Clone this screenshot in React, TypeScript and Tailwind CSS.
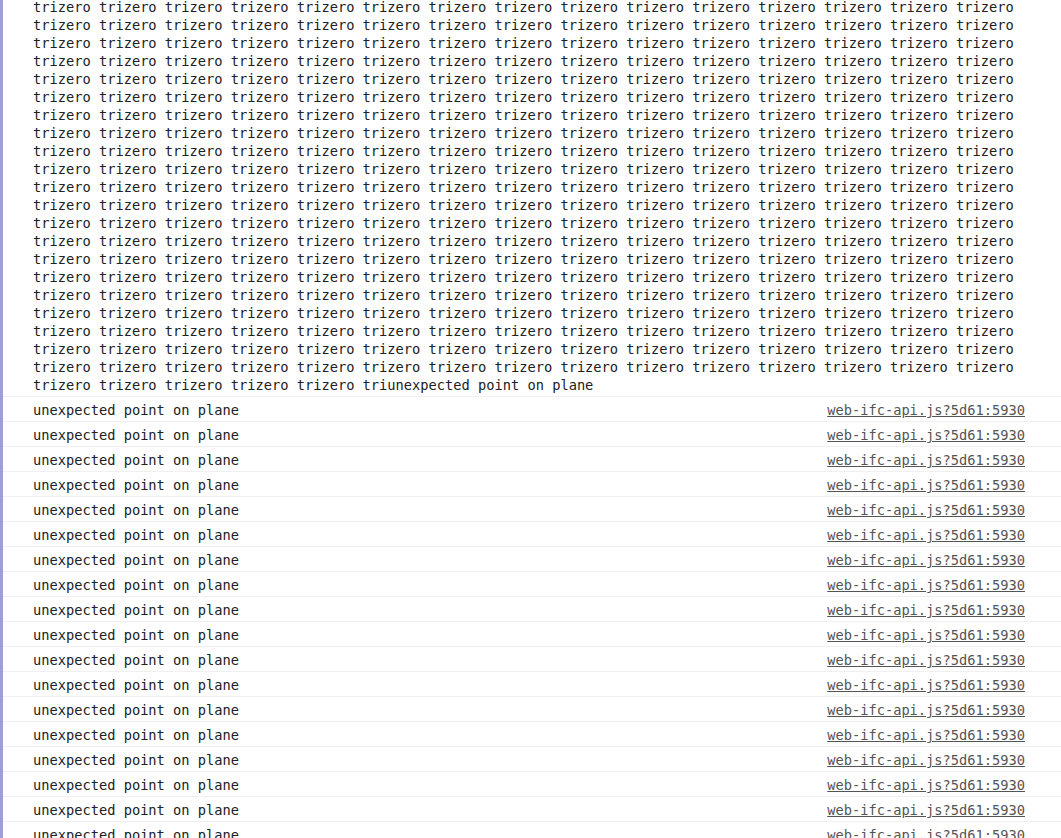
import React from "react";

const full = Array(15).fill("trizero").join(" ");
const lines: string[] = [...Array(21).fill(full), "trizero trizero trizero trizero trizero triunexpected point on plane"];

export default function App() {
  return (
    <div
      className="w-[1061px] h-[838px] overflow-hidden bg-white border-l-[3px] border-[#9d9dd8] text-[#202124]"
      style={{ fontFamily: '"DejaVu Sans Mono", monospace' }}
    >
      <div className="text-[13.7px] leading-[18px]">
        <div className="pl-[30px] -mt-[2px] pb-[2px] border-b border-[#f0f0f0]">
          {lines.map((l, i) => (
            <div key={i} className="whitespace-pre h-[18px]">
              {l}
            </div>
          ))}
        </div>
        {Array.from({ length: 18 }).map((_, i) => (
          <div
            key={i}
            className="flex justify-between pl-[30px] pr-[36px] pt-[4px] pb-[2px] border-b border-[#f0f0f0]"
          >
            <span className="whitespace-pre">unexpected point on plane</span>
            <span className="whitespace-pre text-[#545454] underline">web-ifc-api.js?5d61:5930</span>
          </div>
        ))}
      </div>
    </div>
  );
}
